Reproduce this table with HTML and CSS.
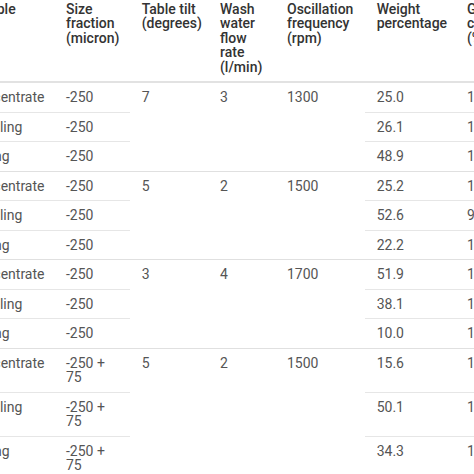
FILE: index.html
```html
<!DOCTYPE html>
<html>
<head>
<meta charset="utf-8">
<link rel="stylesheet" href="styles.css">
</head>
<body>
<div class="crop">
<table class="data">
<colgroup>
<col class="c1"><col class="c2"><col class="c3"><col class="c4"><col class="c5"><col class="c6"><col class="c7">
</colgroup>
<thead>
<tr>
<th>Sample</th>
<th>Size fraction (micron)</th>
<th>Table tilt (degrees)</th>
<th>Wash water flow rate (l/min)</th>
<th>Oscillation frequency (rpm)</th>
<th>Weight percentage</th>
<th>Grade content (%)</th>
</tr>
</thead>
<tbody>
<tr><td>Concentrate</td><td>-250</td><td rowspan="3" class="grp">7</td><td rowspan="3" class="grp">3</td><td rowspan="3" class="grp">1300</td><td>25.0</td><td>10.5</td></tr>
<tr><td>Middling</td><td>-250</td><td>26.1</td><td>11.2</td></tr>
<tr class="end"><td>Tailing</td><td>-250</td><td>48.9</td><td>12.0</td></tr>

<tr><td>Concentrate</td><td>-250</td><td rowspan="3" class="grp">5</td><td rowspan="3" class="grp">2</td><td rowspan="3" class="grp">1500</td><td>25.2</td><td>13.4</td></tr>
<tr><td>Middling</td><td>-250</td><td>52.6</td><td>9.8</td></tr>
<tr class="end"><td>Tailing</td><td>-250</td><td>22.2</td><td>11.7</td></tr>

<tr><td>Concentrate</td><td>-250</td><td rowspan="3" class="grp">3</td><td rowspan="3" class="grp">4</td><td rowspan="3" class="grp">1700</td><td>51.9</td><td>14.1</td></tr>
<tr><td>Middling</td><td>-250</td><td>38.1</td><td>12.6</td></tr>
<tr class="end"><td>Tailing</td><td>-250</td><td>10.0</td><td>10.3</td></tr>

<tr><td>Concentrate</td><td>-250 + 75</td><td rowspan="3" class="grp">5</td><td rowspan="3" class="grp">2</td><td rowspan="3" class="grp">1500</td><td>15.6</td><td>13.9</td></tr>
<tr><td>Middling</td><td>-250 + 75</td><td>50.1</td><td>12.2</td></tr>
<tr class="end"><td>Tailing</td><td>-250 + 75</td><td>34.3</td><td>11.8</td></tr>
</tbody>
</table>
</div>
</body>
</html>
```

FILE: styles.css
```css
html, body {
  margin: 0;
  padding: 0;
  background: #ffffff;
  overflow: hidden;
}

.crop {
  margin-left: -43.5px;
  margin-top: -5.5px;
}

.data {
  border-collapse: separate;
  border-spacing: 0;
  table-layout: fixed;
  width: 588.5px;
  font-family: Roboto, "Liberation Sans", sans-serif;
  font-size: 14px;
  line-height: 14.5px;
}

.c1 { width: 97.5px; }
.c2 { width: 75.7px; }
.c3 { width: 78.3px; }
.c4 { width: 67px; }
.c5 { width: 89.7px; }
.c6 { width: 90.3px; }
.c7 { width: 90px; }

.data th,
.data td {
  padding: 7px 8px 7px 12px;
  text-align: left;
  vertical-align: top;
}

.data th {
  color: #333333;
  font-weight: 500;
  border-bottom: 2px solid #e2e2e2;
}

.data td {
  color: #555555;
  font-weight: 400;
  border-bottom: 1px solid #e6e6e6;
}

.data tr.end td,
.data td.grp {
  border-bottom-color: #e0e0e0;
}
```
